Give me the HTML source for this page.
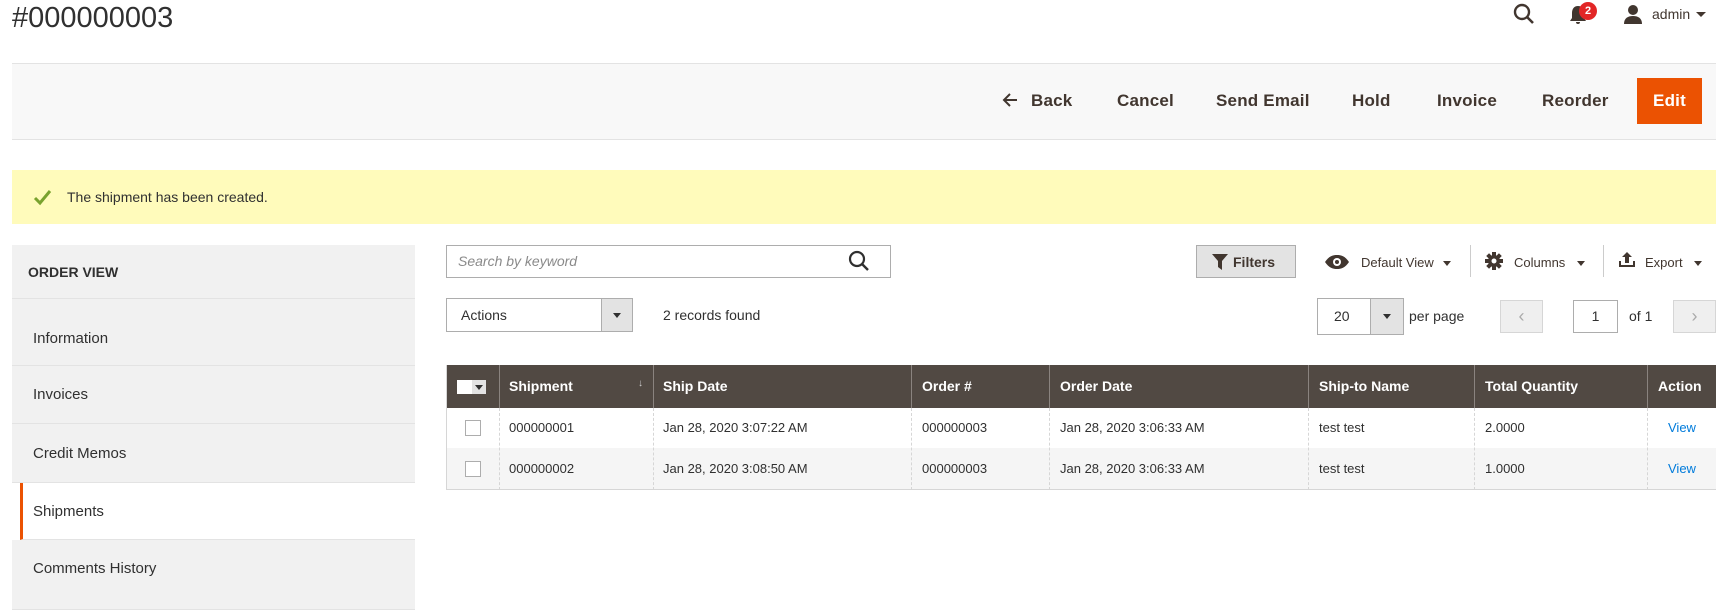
<!DOCTYPE html>
<html><head><meta charset="utf-8"><style>
*{box-sizing:border-box;margin:0;padding:0}
body{width:1732px;height:608px;overflow:hidden;background:#fff;font-family:"Liberation Sans",Arial,sans-serif;color:#303030;position:relative}
.a{position:absolute}
.btn{position:absolute;top:78px;height:46px;line-height:46px;font-size:17px;font-weight:bold;color:#41362f;letter-spacing:.2px}
.si{position:absolute;left:12px;width:403px;background:#f1f1f1;border-bottom:1px solid #e3e3e3;font-size:15px;color:#303030;padding-left:21px}
.th{position:absolute;top:365px;height:43px;line-height:43px;color:#fff;font-weight:bold;font-size:14px}
.td{position:absolute;font-size:13px;color:#303030;line-height:40px}
.vl{position:absolute;top:408px;height:82px;border-left:1px dashed #d6d6d6}
.hl{position:absolute;top:365px;height:43px;border-left:1px solid #8a837f}
</style></head><body>
<div class="a" style="left:12px;top:2px;font-size:29px;color:#303030">#000000003</div>
<svg class="a" style="left:1513px;top:3px" width="22" height="22" viewBox="0 0 22 22"><circle cx="9" cy="9" r="7" fill="none" stroke="#41362f" stroke-width="2.4"/><path d="M14 14l6 6" stroke="#41362f" stroke-width="2.6"/></svg>
<svg class="a" style="left:1569px;top:4px" width="18" height="22" viewBox="0 0 18 22"><path d="M9 2c-4 0-6 3-6 7v5l-2 3h16l-2-3V9c0-4-2-7-6-7zM7 18a2 2 0 004 0z" fill="#41362f"/></svg>
<div class="a" style="left:1579px;top:2px;width:18px;height:18px;border-radius:9px;background:#e22626;color:#fff;font-size:11px;font-weight:bold;text-align:center;line-height:18px">2</div>
<svg class="a" style="left:1623px;top:4px" width="20" height="20" viewBox="0 0 20 20"><circle cx="10" cy="6" r="5" fill="#41362f"/><path d="M1 20c0-6 4-8 9-8s9 2 9 8z" fill="#41362f"/></svg>
<div class="a" style="left:1652px;top:6px;font-size:14px;color:#41362f">admin</div>
<div class="a" style="left:1696px;top:12px;border:5px solid transparent;border-top:5px solid #41362f;border-bottom:0"></div>
<div class="a" style="left:12px;top:63px;width:1704px;height:77px;background:#f8f8f8;border-top:1px solid #e3e3e3;border-bottom:1px solid #e3e3e3"></div>
<svg class="a" style="left:1002px;top:93px" width="16" height="14" viewBox="0 0 16 14"><path d="M15 7H3M8 1L2 7l6 6" fill="none" stroke="#41362f" stroke-width="2"/></svg>
<div class="btn" style="left:1031px">Back</div>
<div class="btn" style="left:1117px">Cancel</div>
<div class="btn" style="left:1216px">Send Email</div>
<div class="btn" style="left:1352px">Hold</div>
<div class="btn" style="left:1437px">Invoice</div>
<div class="btn" style="left:1542px">Reorder</div>
<div class="btn" style="left:1637px;width:65px;background:#eb5202;color:#fff;text-align:center">Edit</div>
<div class="a" style="left:12px;top:170px;width:1704px;height:54px;background:#fffbbb"></div>
<svg class="a" style="left:33px;top:189px" width="19" height="17" viewBox="0 0 19 17"><path d="M2 9l5 5L17 2" fill="none" stroke="#79a22e" stroke-width="3"/></svg>
<div class="a" style="left:67px;top:189px;font-size:14px;color:#303030">The shipment has been created.</div>
<div class="si" style="top:245px;height:54px;line-height:54px;font-weight:bold;font-size:14px;padding-left:16px">ORDER VIEW</div>
<div class="si" style="top:299px;height:67px;line-height:80px">Information</div>
<div class="si" style="top:366px;height:58px;line-height:58px">Invoices</div>
<div class="si" style="top:424px;height:59px;line-height:60px">Credit Memos</div>
<div class="si" style="top:483px;height:57px;line-height:57px;background:#fff;left:20px;width:395px;border-left:3px solid #eb5202;padding-left:10px">Shipments</div>
<div class="si" style="top:540px;height:70px;line-height:58px">Comments History</div>
<div class="a" style="left:446px;top:245px;width:445px;height:33px;border:1px solid #adadad;background:#fff"></div>
<div class="a" style="left:458px;top:253px;font-size:14px;font-style:italic;color:#8a8a8a">Search by keyword</div>
<svg class="a" style="left:848px;top:250px" width="22" height="22" viewBox="0 0 22 22"><circle cx="9" cy="9" r="7" fill="none" stroke="#303030" stroke-width="2.2"/><path d="M14 14l6 6" stroke="#303030" stroke-width="2.4"/></svg>
<div class="a" style="left:1196px;top:245px;width:100px;height:33px;background:#e3e3e3;border:1px solid #adadad"></div>
<svg class="a" style="left:1212px;top:254px" width="16" height="16" viewBox="0 0 16 16"><path d="M0 0h16L10 7v9L6 13V7z" fill="#41362f"/></svg>
<div class="a" style="left:1233px;top:254px;font-size:14px;font-weight:bold;color:#41362f">Filters</div>
<svg class="a" style="left:1325px;top:255px" width="24" height="14" viewBox="0 0 24 14"><path d="M0 7C4 1 8 0 12 0s8 1 12 7c-4 6-8 7-12 7S4 13 0 7z" fill="#41362f"/><circle cx="12" cy="7" r="4" fill="#fff"/><circle cx="12" cy="7" r="2" fill="#41362f"/></svg>
<div class="a" style="left:1361px;top:255px;font-size:13px;color:#41362f">Default View</div>
<div class="a" style="left:1443px;top:261px;border:4px solid transparent;border-top:5px solid #41362f;border-bottom:0"></div>
<div class="a" style="left:1470px;top:245px;height:32px;border-left:1px solid #ccc"></div>
<svg class="a" style="left:1485px;top:252px" width="18" height="18" viewBox="0 0 18 18"><g fill="#41362f"><circle cx="9" cy="9" r="6"/><rect x="7" y="0" width="4" height="18"/><rect x="0" y="7" width="18" height="4"/><rect x="7" y="0" width="4" height="18" transform="rotate(45 9 9)"/><rect x="7" y="0" width="4" height="18" transform="rotate(-45 9 9)"/></g><circle cx="9" cy="9" r="2.5" fill="#fff"/></svg>
<div class="a" style="left:1514px;top:255px;font-size:13px;color:#41362f">Columns</div>
<div class="a" style="left:1577px;top:261px;border:4px solid transparent;border-top:5px solid #41362f;border-bottom:0"></div>
<div class="a" style="left:1603px;top:245px;height:32px;border-left:1px solid #ccc"></div>
<svg class="a" style="left:1618px;top:252px" width="18" height="16" viewBox="0 0 18 16"><path d="M9 0l5 5h-3v6H7V5H4z M1 9h2v4h12V9h2v6H1z" fill="#41362f"/></svg>
<div class="a" style="left:1645px;top:255px;font-size:13px;color:#41362f">Export</div>
<div class="a" style="left:1694px;top:261px;border:4px solid transparent;border-top:5px solid #41362f;border-bottom:0"></div>
<div class="a" style="left:446px;top:298px;width:187px;height:34px;border:1px solid #adadad;background:#fff"></div>
<div class="a" style="left:601px;top:299px;width:31px;height:32px;background:#e3e3e3;border-left:1px solid #adadad"></div>
<div class="a" style="left:613px;top:313px;border:4px solid transparent;border-top:5px solid #303030;border-bottom:0"></div>
<div class="a" style="left:461px;top:307px;font-size:14px">Actions</div>
<div class="a" style="left:663px;top:307px;font-size:14px">2 records found</div>
<div class="a" style="left:1317px;top:298px;width:87px;height:37px;border:1px solid #adadad;background:#fff"></div>
<div class="a" style="left:1370px;top:299px;width:33px;height:35px;background:#e3e3e3;border-left:1px solid #adadad"></div>
<div class="a" style="left:1383px;top:314px;border:4px solid transparent;border-top:5px solid #303030;border-bottom:0"></div>
<div class="a" style="left:1334px;top:308px;font-size:14px">20</div>
<div class="a" style="left:1409px;top:308px;font-size:14px">per page</div>
<div class="a" style="left:1500px;top:300px;width:43px;height:33px;background:#efefef;border:1px solid #d6d6d6;color:#aaa;text-align:center;line-height:30px;font-size:18px">&#8249;</div>
<div class="a" style="left:1573px;top:300px;width:45px;height:33px;border:1px solid #adadad;text-align:center;line-height:31px;font-size:14px">1</div>
<div class="a" style="left:1629px;top:308px;font-size:14px">of 1</div>
<div class="a" style="left:1673px;top:300px;width:43px;height:33px;background:#efefef;border:1px solid #d6d6d6;color:#aaa;text-align:center;line-height:30px;font-size:18px">&#8250;</div>
<div class="a" style="left:446px;top:365px;width:1270px;height:43px;background:#514943"></div>
<div class="a" style="left:446px;top:408px;width:1270px;height:40px;background:#fff"></div>
<div class="a" style="left:446px;top:448px;width:1270px;height:42px;background:#f5f5f5;border-bottom:1px solid #d6d6d6"></div>
<div class="a" style="left:446px;top:365px;height:125px;border-left:1px solid #d6d6d6"></div>
<div class="hl" style="left:499px"></div><div class="hl" style="left:653px"></div><div class="hl" style="left:911px"></div><div class="hl" style="left:1049px"></div><div class="hl" style="left:1308px"></div><div class="hl" style="left:1474px"></div><div class="hl" style="left:1647px"></div>
<div class="vl" style="left:499px"></div><div class="vl" style="left:653px"></div><div class="vl" style="left:911px"></div><div class="vl" style="left:1049px"></div><div class="vl" style="left:1308px"></div><div class="vl" style="left:1474px"></div><div class="vl" style="left:1647px"></div>
<div class="a" style="left:457px;top:380px;width:15px;height:14px;background:#fff"></div>
<div class="a" style="left:472px;top:380px;width:14px;height:14px;background:#e3e3e3"></div>
<div class="a" style="left:475px;top:385px;border:4px solid transparent;border-top:5px solid #303030;border-bottom:0"></div>
<div class="th" style="left:509px">Shipment</div>
<div class="a" style="left:638px;top:378px;font-size:10px;color:#ccc">&#8595;</div>
<div class="th" style="left:663px">Ship Date</div>
<div class="th" style="left:922px">Order #</div>
<div class="th" style="left:1060px">Order Date</div>
<div class="th" style="left:1319px">Ship-to Name</div>
<div class="th" style="left:1485px">Total Quantity</div>
<div class="th" style="left:1658px">Action</div>
<div class="a" style="left:465px;top:420px;width:16px;height:16px;border:1px solid #adadad;background:#fff"></div>
<div class="a" style="left:465px;top:461px;width:16px;height:16px;border:1px solid #adadad;background:#fff"></div>
<div class="td" style="left:509px;top:408px">000000001</div>
<div class="td" style="left:663px;top:408px">Jan 28, 2020 3:07:22 AM</div>
<div class="td" style="left:922px;top:408px">000000003</div>
<div class="td" style="left:1060px;top:408px">Jan 28, 2020 3:06:33 AM</div>
<div class="td" style="left:1319px;top:408px">test test</div>
<div class="td" style="left:1485px;top:408px">2.0000</div>
<div class="td" style="left:1668px;top:408px;color:#007bdb">View</div>
<div class="td" style="left:509px;top:449px">000000002</div>
<div class="td" style="left:663px;top:449px">Jan 28, 2020 3:08:50 AM</div>
<div class="td" style="left:922px;top:449px">000000003</div>
<div class="td" style="left:1060px;top:449px">Jan 28, 2020 3:06:33 AM</div>
<div class="td" style="left:1319px;top:449px">test test</div>
<div class="td" style="left:1485px;top:449px">1.0000</div>
<div class="td" style="left:1668px;top:449px;color:#007bdb">View</div>
</body></html>
